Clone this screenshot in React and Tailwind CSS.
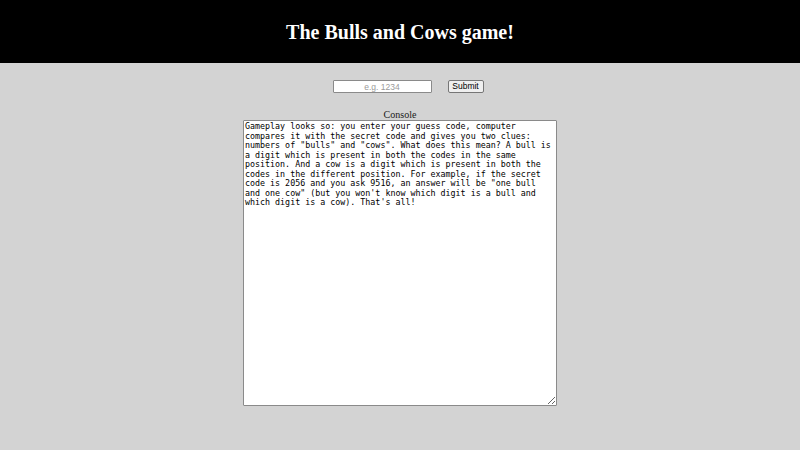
import React, { useState } from 'react';

const intro =
  'Gameplay looks so: you enter your guess code, computer compares it with the secret code and gives you two clues: numbers of "bulls" and "cows". What does this mean? A bull is a digit which is present in both the codes in the same position. And a cow is a digit which is present in both the codes in the different position. For example, if the secret code is 2056 and you ask 9516, an answer will be "one bull and one cow" (but you won\'t know which digit is a bull and which digit is a cow). That\'s all!';

function App() {
  const [guess, setGuess] = useState('');
  const [log, setLog] = useState(intro);

  return (
    <div className="min-h-screen bg-[#d3d3d3] font-['Liberation_Serif',serif]">
      <header className="h-[63px] bg-black flex items-center justify-center">
        <h1 className="text-[20px] font-bold text-white">The Bulls and Cows game!</h1>
      </header>

      <main className="flex flex-col items-center">
        {/* guess form */}
        <div className="flex items-center gap-[16px] mt-[17px] pl-[16px]">
          <input
            value={guess}
            onChange={(e) => setGuess(e.target.value)}
            placeholder="e.g. 1234"
            className="w-[99px] h-[13px] bg-white border border-[#8a8a8a] rounded-[1px] text-center text-[8.5px] font-['Liberation_Sans',sans-serif] placeholder:text-[#9a9a9a] outline-none"
          />
          <button className="h-[13px] w-[36px] bg-[#efefef] border border-[#767676] rounded-[2px] text-[8.5px] leading-none font-['Liberation_Sans',sans-serif] text-black">
            Submit
          </button>
        </div>

        <label className="mt-[16px] text-[10px] leading-[11px] text-[#1a1a1a]">Console</label>
        <textarea
          value={log}
          onChange={(e) => setLog(e.target.value)}
          className="w-[314px] h-[286px] bg-white border border-[#8a8a8a] rounded-[1px] px-[1px] py-[1px] text-[8.33px] leading-[9.5px] font-['DejaVu_Sans_Mono',monospace] text-black resize-y outline-none"
        />
      </main>
    </div>
  );
}

export default App;
